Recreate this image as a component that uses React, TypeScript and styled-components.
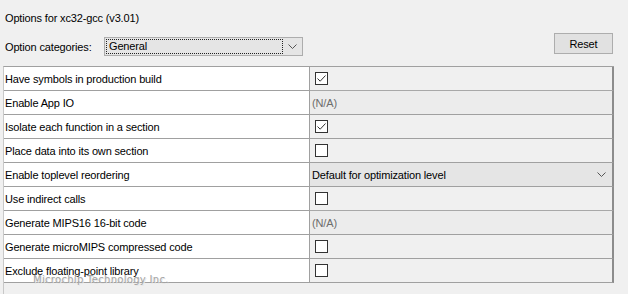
import React from "react";
import styled, { createGlobalStyle } from "styled-components";

const Global = createGlobalStyle`
  html, body { margin: 0; padding: 0; background: #f0f0f0; }
  body { font-family: "Liberation Sans", Arial, sans-serif; font-size: 11px; letter-spacing: -0.15px; color: #000; overflow: hidden; }
`;

const Page = styled.div`
  position: relative;
  width: 628px;
  height: 294px;
  background: #f0f0f0;
  overflow: hidden;
`;

const Title = styled.div`
  padding: 11px 0 0 5px;
  line-height: 14px;
  height: 22px;
`;

const HeaderRow = styled.div`
  display: flex;
  align-items: flex-start;
  height: 33px;
  padding: 0 15px 0 5px;
`;

const Label = styled.div`
  width: 99px;
  margin-top: 7px;
  line-height: 14px;
`;

const Combo = styled.div`
  box-sizing: border-box;
  margin-top: 4px;
  width: 199px;
  height: 19px;
  background: #e5e5e5;
  border: 1px solid #adadad;
  display: flex;
  align-items: center;
  padding: 1px;
`;

const FocusText = styled.div`
  box-sizing: border-box;
  flex: 1;
  height: 15px;
  border: 1px dotted #222;
  line-height: 13px;
  padding-left: 2px;
`;

const ArrowBox = styled.div`
  width: 18px;
  display: flex;
  justify-content: center;
  align-items: center;
`;

const Button = styled.div`
  box-sizing: border-box;
  margin-left: auto;
  width: 59px;
  height: 21px;
  background: #e1e1e1;
  border: 1px solid #adadad;
  display: flex;
  align-items: center;
  justify-content: center;
  font-size: 11px;
`;

const Table = styled.div`
  box-sizing: border-box;
  margin-left: 3px;
  width: 611px;
  border-top: 1px solid #a0a0a0;
  border-left: 1px solid #c8c8c8;
  display: grid;
  grid-template-columns: 306px 1fr;
`;

const NameCell = styled.div`
  box-sizing: border-box;
  height: 24px;
  background: #fff;
  border-bottom: 1px solid #a0a0a0;
  border-right: 1px solid #a0a0a0;
  padding-left: 1px;
  display: flex;
  align-items: center;
  white-space: nowrap;
`;

const ValueCell = styled.div<{ $kind: "check" | "na" | "combo" }>`
  box-sizing: border-box;
  height: 24px;
  background: ${(p) => (p.$kind === "combo" ? "#e5e5e5" : p.$kind === "na" ? "#ececec" : "#f0f0f0")};
  border-bottom: 1px solid #a0a0a0;
  border-right: 2px solid #8c8c8c;
  ${(p) => (p.$kind === "na" ? "border-top: 1px solid #a8a8a8; margin-top: -1px; height: 25px;" : "")}
  display: flex;
  align-items: center;
  padding-left: ${(p) => (p.$kind === "check" ? "5px" : "2px")};
  padding-right: 6px;
  color: ${(p) => (p.$kind === "na" ? "#6d6d6d" : "#000")};
`;

const CheckBox = styled.div`
  box-sizing: border-box;
  width: 13px;
  height: 13px;
  background: #fff;
  border: 1px solid #333;
  display: flex;
  align-items: center;
  justify-content: center;
`;

const Filler = styled.div`
  grid-column: 1 / 3;
  height: 12px;
  background: #f0f0f0;
`;

const Watermark = styled.div`
  position: absolute;
  left: 33px;
  top: 274px;
  font-family: "DejaVu Sans", sans-serif;
  font-size: 10px;
  letter-spacing: 0.3px;
  color: #a3a3a3;
  text-shadow: 1px 1px 0 #e8e8e8;
  white-space: nowrap;
`;

const Chevron = () => (
  <svg width="9" height="5" viewBox="0 0 9 5">
    <path d="M0.5 0.5 L4.5 4.5 L8.5 0.5" fill="none" stroke="#555" strokeWidth="1" />
  </svg>
);

const Check = () => (
  <svg width="11" height="11" viewBox="0 0 11 11">
    <path d="M1.5 5.5 L4.2 8.2 L9.5 2.5" fill="none" stroke="#333" strokeWidth="1" />
  </svg>
);

type Row = { name: string; kind: "check" | "na" | "combo"; checked?: boolean; text?: string };

const rows: Row[] = [
  { name: "Have symbols in production build", kind: "check", checked: true },
  { name: "Enable App IO", kind: "na" },
  { name: "Isolate each function in a section", kind: "check", checked: true },
  { name: "Place data into its own section", kind: "check" },
  { name: "Enable toplevel reordering", kind: "combo", text: "Default for optimization level" },
  { name: "Use indirect calls", kind: "check" },
  { name: "Generate MIPS16 16-bit code", kind: "na" },
  { name: "Generate microMIPS compressed code", kind: "check" },
  { name: "Exclude floating-point library", kind: "check" },
];

const ComboText = styled.span`
  flex: 1;
`;

export default function App() {
  return (
    <Page>
      <Global />
      <Title>Options for xc32-gcc (v3.01)</Title>
      <HeaderRow>
        <Label>Option categories:</Label>
        <Combo>
          <FocusText>General</FocusText>
          <ArrowBox>
            <Chevron />
          </ArrowBox>
        </Combo>
        <Button>Reset</Button>
      </HeaderRow>
      <Table>
        {rows.map((r) => (
          <React.Fragment key={r.name}>
            <NameCell>{r.name}</NameCell>
            <ValueCell $kind={r.kind}>
              {r.kind === "check" && <CheckBox>{r.checked && <Check />}</CheckBox>}
              {r.kind === "na" && "(N/A)"}
              {r.kind === "combo" && (
                <>
                  <ComboText>{r.text}</ComboText>
                  <Chevron />
                </>
              )}
            </ValueCell>
          </React.Fragment>
        ))}
        <Filler />
      </Table>
      <Watermark>Microchip Technology Inc.</Watermark>
    </Page>
  );
}
